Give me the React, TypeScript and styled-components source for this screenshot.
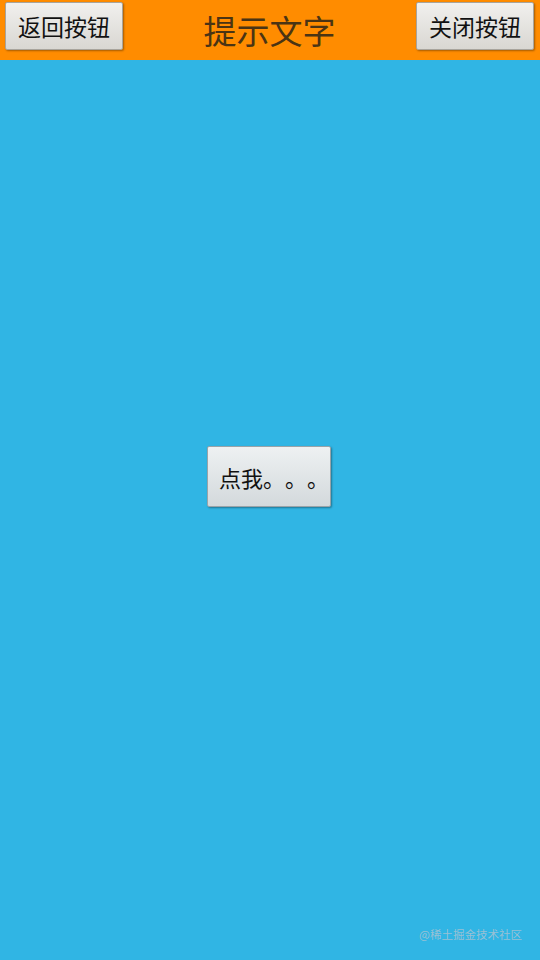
import React from 'react';
import styled, { createGlobalStyle } from 'styled-components';

const GlobalStyle = createGlobalStyle`
  html, body {
    margin: 0;
    padding: 0;
  }
  body {
    font-family: "Noto Sans CJK SC", "Noto Sans", sans-serif;
  }
`;

const Screen = styled.div`
  width: 540px;
  height: 960px;
  display: flex;
  flex-direction: column;
  background: #30b5e4;
  position: relative;
  overflow: hidden;
`;

const TitleBar = styled.div`
  height: 60px;
  box-sizing: border-box;
  padding: 2px 6px 10px 5px;
  background: #ff8c00;
  display: flex;
  align-items: stretch;
  justify-content: space-between;
`;

const Title = styled.div`
  flex: 1;
  display: flex;
  align-items: center;
  justify-content: center;
  font-size: 33px;
  color: #4a3414;
  line-height: 1;
  padding-top: 8px;
`;

const Button = styled.button<{ $tint?: boolean }>`
  box-sizing: border-box;
  border: 1px solid ${(p) => (p.$tint ? '#9aa3a8' : '#a8a49c')};
  border-radius: 2px;
  background: ${(p) => (p.$tint
    ? 'linear-gradient(#eef1f2, #d3d9dc)'
    : 'linear-gradient(#f1f0ee, #d9d7d2)')};
  box-shadow: 1px 1px 2px rgba(0, 0, 0, 0.35);
  font-family: "Noto Sans CJK SC", "Noto Sans", sans-serif;
  color: #111;
  padding: 0;
  cursor: pointer;
  text-spacing-trim: space-all;
`;

const BarButton = styled(Button)`
  width: 118px;
  font-size: 23px;
`;

const Body = styled.div`
  flex: 1;
  display: flex;
  align-items: center;
  justify-content: center;
  padding-bottom: 67px;
`;

const ClickButton = styled(Button)`
  width: 124px;
  height: 61px;
  font-size: 22px;
  text-align: left;
  padding-left: 11px;
  margin-right: 2px;
  white-space: nowrap;
`;

const Watermark = styled.div`
  position: absolute;
  right: 18px;
  bottom: 18px;
  font-size: 11.5px;
  color: rgba(180, 196, 208, 0.8);
`;

const App: React.FC = () => (
  <Screen>
    <GlobalStyle />
    <TitleBar>
      <BarButton>返回按钮</BarButton>
      <Title>提示文字</Title>
      <BarButton>关闭按钮</BarButton>
    </TitleBar>
    <Body>
      <ClickButton $tint>点我。。。</ClickButton>
    </Body>
    <Watermark>@稀土掘金技术社区</Watermark>
  </Screen>
);

export default App;
